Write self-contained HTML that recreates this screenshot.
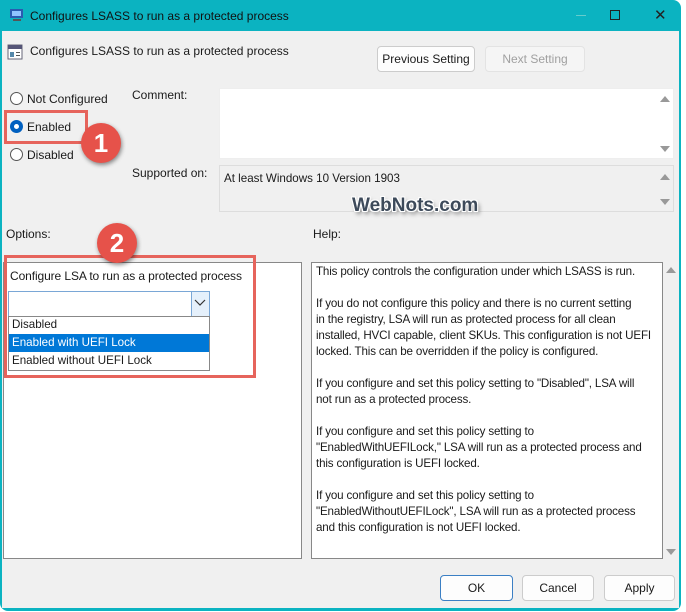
<!DOCTYPE html>
<html><head><style>
*{margin:0;padding:0;box-sizing:border-box}
body{width:686px;height:612px;background:#fff;font-family:"Liberation Sans",sans-serif;font-size:12px;color:#1a1a1a;position:relative;overflow:hidden}
.a{position:absolute}
.win{left:0;top:0;width:681px;height:611px;background:#0bb3c1;border-radius:0 8px 8px 8px}
.body{left:2px;top:31px;width:677px;height:577px;background:#f0f0f0}
.btn{position:absolute;background:#fdfdfd;border:1px solid #ccc;border-radius:4px;text-align:center;line-height:24px;font-size:12px}
.radio{position:absolute;width:13px;height:13px;border:1px solid #555;border-radius:50%;background:#fff}
.box{position:absolute;background:#fff;border:1px solid #ccc}
.up,.dn{position:absolute;width:0;height:0;border-left:5px solid transparent;border-right:5px solid transparent}
.up{border-bottom:6px solid #999}.dn{border-top:6px solid #999}
.badge{position:absolute;width:40px;height:40px;border-radius:50%;background:#e6524a;color:#fff;font-size:26px;font-weight:bold;text-align:center;line-height:40px;box-shadow:1px 2px 4px rgba(0,0,0,.45)}
.red{position:absolute;border:3px solid #e6645c}
.help div{position:absolute;left:4px;white-space:nowrap;font-size:11.6px;letter-spacing:-0.15px}
</style></head><body>
<div class="a win"></div>
<div class="a body"></div>
<svg class="a" style="left:9px;top:8px" width="16" height="14"><rect x="1" y="1" width="13" height="9" fill="#2a5bb0"/><rect x="3" y="3" width="9" height="5" fill="#8fc4ff"/><rect x="4" y="11" width="8" height="2" fill="#555"/></svg>
<div class="a" style="left:30px;top:9px;font-size:12px;color:#111">Configures LSASS to run as a protected process</div>
<div class="a" style="left:576px;top:15px;width:10px;height:1px;background:#6cc"></div>
<div class="a" style="left:610px;top:10px;width:10px;height:10px;border:1.3px solid #222"></div>
<div class="a" style="left:654px;top:6px;font-size:15px;color:#222">✕</div>
<svg class="a" style="left:7px;top:44px" width="16" height="16"><rect x="1" y="1" width="14" height="14" fill="#fff" stroke="#667"/><rect x="1" y="1" width="14" height="4" fill="#557"/><rect x="3" y="8" width="4" height="5" fill="#58a"/><rect x="9" y="8" width="4" height="1" fill="#555"/><rect x="9" y="11" width="4" height="1" fill="#555"/></svg>
<div class="a" style="left:30px;top:44px;font-size:12px">Configures LSASS to run as a protected process</div>
<div class="btn" style="left:377px;top:46px;width:98px;height:26px">Previous Setting</div>
<div class="btn" style="left:485px;top:46px;width:100px;height:26px;color:#a0a0a0;background:#f5f5f5;border-color:#e3e3e3">Next Setting</div>
<div class="radio" style="left:10px;top:92px"></div><div class="a" style="left:27px;top:92px;font-size:12px">Not Configured</div>
<div class="radio" style="left:10px;top:120px;border:4px solid #0060c0"></div><div class="a" style="left:27px;top:120px;font-size:12px">Enabled</div>
<div class="radio" style="left:10px;top:148px"></div><div class="a" style="left:27px;top:148px;font-size:12px">Disabled</div>
<div class="red" style="left:4px;top:110px;width:84px;height:34px"></div>
<div class="badge" style="left:81px;top:123px">1</div>
<div class="a" style="left:132px;top:88px;font-size:12px">Comment:</div>
<div class="box" style="left:219px;top:88px;width:455px;height:71px;border-color:#eee"></div>
<div class="up" style="left:660px;top:96px"></div><div class="dn" style="left:660px;top:146px"></div>
<div class="a" style="left:132px;top:166px;font-size:12px">Supported on:</div>
<div class="box" style="left:219px;top:165px;width:455px;height:47px;background:#f0f0f0;border-color:#ddd"></div>
<div class="a" style="left:224px;top:172px;font-size:11.6px">At least Windows 10 Version 1903</div>
<div class="up" style="left:660px;top:174px"></div><div class="dn" style="left:660px;top:199px"></div>
<div class="a" style="left:352px;top:195px;font-size:19px;font-weight:bold;color:#3d4a5a;text-shadow:0 0 2px #fff,1px 1px 0 #fff,-1px -1px 0 #fff,1px -1px 0 #fff,-1px 1px 0 #fff,2px 3px 4px rgba(0,0,0,.5)">WebNots.com</div>
<div class="a" style="left:6px;top:227px;font-size:12px">Options:</div>
<div class="a" style="left:313px;top:227px;font-size:12px">Help:</div>
<div class="box" style="left:3px;top:262px;width:299px;height:297px;border-color:#888"></div>
<div class="a" style="left:10px;top:269px;font-size:12px;letter-spacing:-0.1px">Configure LSA to run as a protected process</div>
<div class="box" style="left:8px;top:291px;width:202px;height:26px;border-color:#7aa7d6"></div>
<div class="a" style="left:191px;top:292px;width:18px;height:24px;background:#e5f0fb;border-left:1px solid #7aa7d6"></div>
<svg class="a" style="left:194px;top:299px" width="12" height="8"><path d="M1 1 L6 6 L11 1" stroke="#333" fill="none" stroke-width="1.2"/></svg>
<div class="box" style="left:8px;top:316px;width:202px;height:55px;border-color:#888"></div>
<div class="a" style="left:12px;top:318px;font-size:11.6px">Disabled</div>
<div class="a" style="left:9px;top:334px;width:200px;height:18px;background:#0078d7"></div>
<div class="a" style="left:12px;top:336px;color:#fff;font-size:11.6px">Enabled with UEFI Lock</div>
<div class="a" style="left:12px;top:354px;font-size:11.6px">Enabled without UEFI Lock</div>
<div class="red" style="left:4px;top:255px;width:252px;height:123px"></div>
<div class="badge" style="left:97px;top:223px">2</div>
<div class="box help" style="left:311px;top:262px;width:352px;height:297px;border-color:#888">
<div style="top:2px">This policy controls the configuration under which LSASS is run.</div>
<div style="top:34px">If you do not configure this policy and there is no current setting</div>
<div style="top:50px">in the registry, LSA will run as protected process for all clean</div>
<div style="top:66px">installed, HVCI capable, client SKUs. This configuration is not UEFI</div>
<div style="top:82px">locked. This can be overridden if the policy is configured.</div>
<div style="top:114px">If you configure and set this policy setting to "Disabled", LSA will</div>
<div style="top:130px">not run as a protected process.</div>
<div style="top:162px">If you configure and set this policy setting to</div>
<div style="top:178px">"EnabledWithUEFILock," LSA will run as a protected process and</div>
<div style="top:194px">this configuration is UEFI locked.</div>
<div style="top:226px">If you configure and set this policy setting to</div>
<div style="top:242px">"EnabledWithoutUEFILock", LSA will run as a protected process</div>
<div style="top:258px">and this configuration is not UEFI locked.</div>
</div>
<div class="up" style="left:666px;top:267px"></div><div class="dn" style="left:666px;top:549px"></div>
<div class="btn" style="left:440px;top:575px;width:73px;height:26px;border-color:#3b7fc4">OK</div>
<div class="btn" style="left:522px;top:575px;width:72px;height:26px">Cancel</div>
<div class="btn" style="left:604px;top:575px;width:71px;height:26px">Apply</div>
</body></html>
